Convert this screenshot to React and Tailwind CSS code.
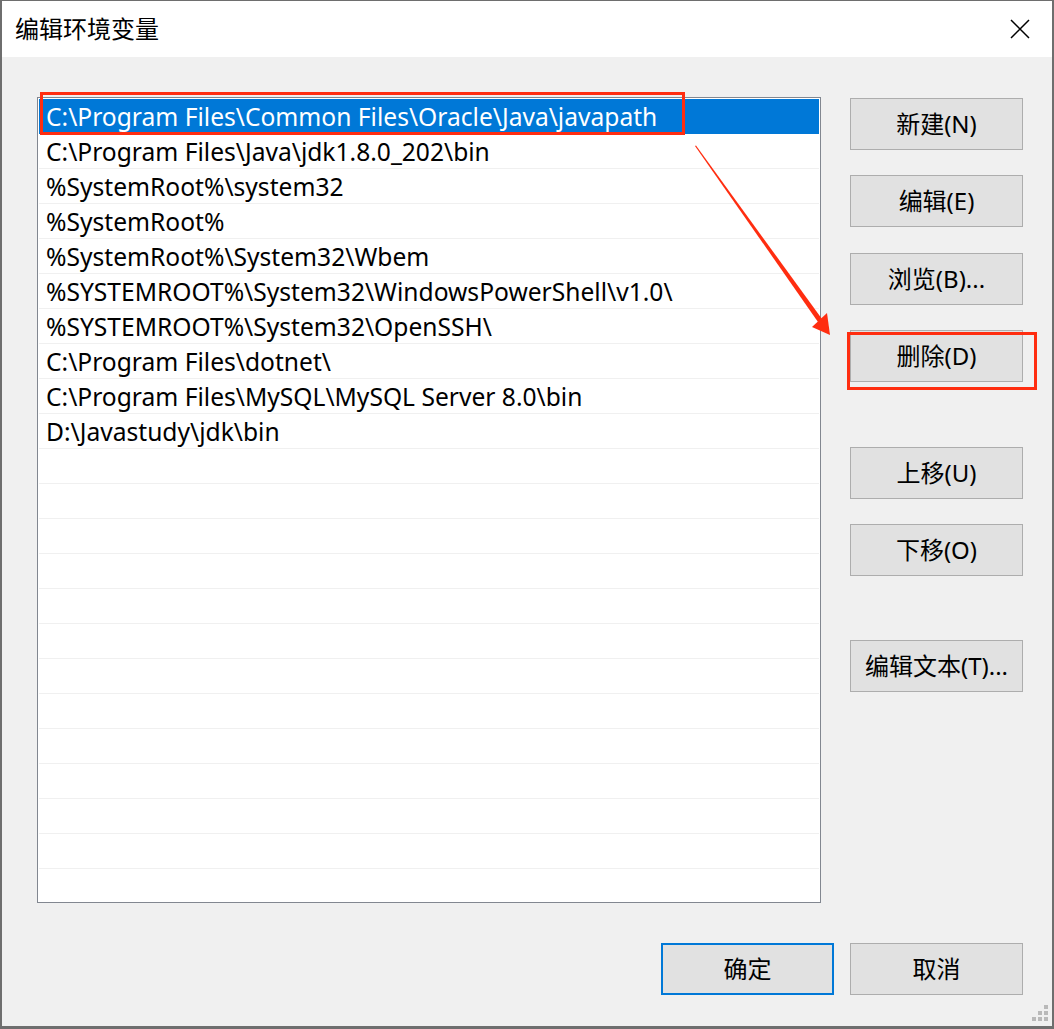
import React from "react";

const paths = [
  "C:\\Program Files\\Common Files\\Oracle\\Java\\javapath",
  "C:\\Program Files\\Java\\jdk1.8.0_202\\bin",
  "%SystemRoot%\\system32",
  "%SystemRoot%",
  "%SystemRoot%\\System32\\Wbem",
  "%SYSTEMROOT%\\System32\\WindowsPowerShell\\v1.0\\",
  "%SYSTEMROOT%\\System32\\OpenSSH\\",
  "C:\\Program Files\\dotnet\\",
  "C:\\Program Files\\MySQL\\MySQL Server 8.0\\bin",
  "D:\\Javastudy\\jdk\\bin",
];

const rows = [...paths, ...Array(13).fill("")];

const font = { fontFamily: '"Noto Sans", "Noto Sans CJK SC", sans-serif' };

function Btn({ children, className = "" }) {
  return (
    <div
      className={`w-[173px] h-[52px] bg-[#e1e1e1] border border-[#adadad] flex items-center justify-center text-[24px] text-black ${className}`}
    >
      {children}
    </div>
  );
}

export default function App() {
  return (
    <div
      className="relative w-[1054px] h-[1029px] border-l-2 border-r-2 border-t border-b-[3px] border-[#6e6e6e] flex flex-col overflow-hidden"
      style={font}
    >
      <div className="h-[56px] bg-white flex items-center justify-between pl-[13px] pr-[22px] shrink-0">
        <span className="text-[24px] text-black">编辑环境变量</span>
        <svg width="20" height="20" viewBox="0 0 20 20">
          <path d="M1 1 L19 19 M19 1 L1 19" stroke="#000" strokeWidth="1.5" />
        </svg>
      </div>
      <div className="flex-1 bg-[#f0f0f0] flex flex-col">
        <div className="flex pl-[35px] pt-[40px]">
          <div className="w-[784px] h-[806px] border border-[#828790] bg-white overflow-hidden py-px px-px">
            {rows.map((r, i) => (
              <div
                key={i}
                className={`h-[35px] flex items-center pl-[7px] pt-[2px] text-[24.6px] whitespace-nowrap border-b ${
                  i === 0
                    ? "bg-[#0078d7] text-white border-[#0078d7]"
                    : "text-black border-[#f0f0f0]"
                }`}
              >
                {r}
              </div>
            ))}
          </div>
          <div className="ml-[29px] pt-px flex flex-col">
            <Btn>新建(N)</Btn>
            <Btn className="mt-[25px]">编辑(E)</Btn>
            <Btn className="mt-[26px]">浏览(B)...</Btn>
            <Btn className="mt-[25px]">删除(D)</Btn>
            <Btn className="mt-[65px]">上移(U)</Btn>
            <Btn className="mt-[25px]">下移(O)</Btn>
            <Btn className="mt-[64px]">编辑文本(T)...</Btn>
          </div>
        </div>
        <div className="flex justify-end gap-[16px] pr-[29px] mt-[40px]">
          <Btn className="!border-2 !border-[#0078d7]">确定</Btn>
          <Btn>取消</Btn>
        </div>
      </div>

      {/* annotations */}
      <div className="absolute left-[38px] top-[91px] w-[645px] h-[43px] border-[3px] border-[#ff2d10]" />
      <div className="absolute left-[845px] top-[331px] w-[190px] h-[58px] border-[3px] border-[#ff2d10]" />
      <svg className="absolute left-0 top-0 pointer-events-none" width="1054" height="1029">
        <polygon points="693,145 694,144.5 820,318 816,321" fill="#ff2d10" />
        <polygon points="828,334 810,326 825,312" fill="#ff2d10" />
      </svg>
      {/* resize grip */}
      <svg className="absolute right-[4px] bottom-[5px]" width="16" height="16" viewBox="0 0 16 16">
        <rect x="12" y="0" width="4" height="4" fill="#b9b9b9" />
        <rect x="6" y="6" width="4" height="4" fill="#b9b9b9" />
        <rect x="12" y="6" width="4" height="4" fill="#b9b9b9" />
        <rect x="0" y="12" width="4" height="4" fill="#b9b9b9" />
        <rect x="6" y="12" width="4" height="4" fill="#b9b9b9" />
        <rect x="12" y="12" width="4" height="4" fill="#b9b9b9" />
      </svg>
    </div>
  );
}
